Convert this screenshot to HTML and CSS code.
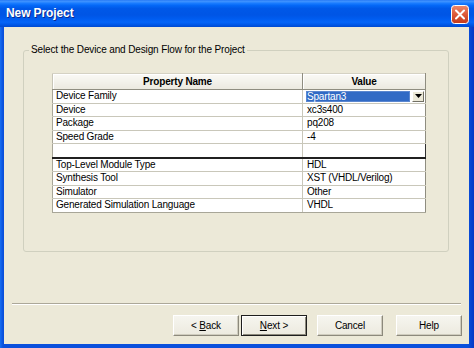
FILE: index.html
```html
<!DOCTYPE html>
<html lang="en">
<head>
  <meta charset="UTF-8" />
  <title>New Project</title>
  <link rel="stylesheet" href="styles.css">
</head>
<body>
  <div class="window">
    <div class="titlebar">
      <span class="title">New Project</span>
      <span class="close-btn">
        <svg width="18" height="19" viewBox="0 0 18 19">
          <defs>
            <linearGradient id="closeGrad" x1="0" y1="0" x2="0" y2="1">
              <stop offset="0" stop-color="#EE8A6C"/>
              <stop offset="0.5" stop-color="#DD5A3A"/>
              <stop offset="1" stop-color="#C3391B"/>
            </linearGradient>
          </defs>
          <rect x="0.5" y="0.5" width="17" height="18" rx="3" fill="url(#closeGrad)" stroke="#FFFFFF"/>
          <path d="M5 5.5 L13 13.5 M13 5.5 L5 13.5" stroke="#FFFFFF" stroke-width="2" stroke-linecap="round"/>
        </svg>
      </span>
    </div>

    <div class="client">
      <fieldset class="group">
        <legend>Select the Device and Design Flow for the Project</legend>
        <table class="props">
          <thead>
            <tr><th class="col-name">Property Name</th><th class="col-value">Value</th></tr>
          </thead>
          <tbody>
            <tr>
              <td>Device Family</td>
              <td class="combo-cell">
                <div class="combo">
                  <span class="combo-text">Spartan3</span>
                  <span class="combo-btn">
                    <svg width="7" height="4" viewBox="0 0 7 4"><path d="M0 0 H7 L3.5 4 Z" fill="#000"/></svg>
                  </span>
                </div>
              </td>
            </tr>
            <tr><td>Device</td><td>xc3s400</td></tr>
            <tr><td>Package</td><td>pq208</td></tr>
            <tr><td>Speed Grade</td><td>-4</td></tr>
            <tr class="blank"><td></td><td class="blank-value"></td></tr>
            <tr><td>Top-Level Module Type</td><td>HDL</td></tr>
            <tr><td>Synthesis Tool</td><td>XST (VHDL/Verilog)</td></tr>
            <tr><td>Simulator</td><td>Other</td></tr>
            <tr><td>Generated Simulation Language</td><td>VHDL</td></tr>
          </tbody>
        </table>
      </fieldset>

      <div class="spacer"></div>
      <div class="separator"></div>

      <div class="buttons">
        <button class="btn">&lt; <u>B</u>ack</button>
        <button class="btn default"><u>N</u>ext &gt;</button>
        <button class="btn cancel">Cancel</button>
        <button class="btn help">Help</button>
      </div>
    </div>
  </div>
</body>
</html>
```

FILE: styles.css
```css
body {
  margin: 0;
  padding: 0;
  font-family: 'Liberation Sans', Arial, sans-serif;
  font-size: 10px;
  color: #000;
  background: #0A4FDB;
}
.window {
  width: 474px;
  height: 348px;
  display: flex;
  flex-direction: column;
  background: linear-gradient(to right, #166EF2 0px, #0A50DC 3px, #0A50DC 468px, #0638C4 474px);
  overflow: hidden;
}
.titlebar {
  height: 27px;
  flex-shrink: 0;
  display: flex;
  align-items: center;
  justify-content: space-between;
  padding: 0 5px 0 6px;
  background: linear-gradient(to bottom,
    #2A7BF5 0%, #3D92FF 6%, #1A7CFF 12%, #0468F7 20%, #0058E8 32%,
    #0055E5 55%, #005CF0 70%, #0565F8 82%, #005AEB 90%, #0049D0 100%);
}
.title {
  color: #fff;
  font-weight: bold;
  font-size: 12px;
  letter-spacing: -0.1px;
  text-shadow: 1px 1px 0 #0A2A90;
  margin-top: -1px;
}
.close-btn {
  display: flex;
  margin-top: 1px;
}
.client {
  flex: 1;
  margin: 0 5px 4px 4px;
  background: #ECE9D8;
  display: flex;
  flex-direction: column;
  padding: 17px 0 8px 0;
}
.group {
  margin: 0 20px 0 19px;
  padding: 0 22px 38px 5px;
  border: 1px solid #D0D0BF;
  border-radius: 3px;
}
.group legend {
  padding: 0 2px;
  line-height: 12px;
  letter-spacing: -0.13px;
  color: #000;
}
.props {
  margin: 17px 0 0 23px;
  width: 374px;
  border-collapse: collapse;
  table-layout: fixed;
  background: #fff;
  letter-spacing: -0.18px;
}
.props .col-name {
  width: 249px;
}
.props th {
  height: 15px;
  padding: 0;
  font-weight: bold;
  text-align: center;
  background: linear-gradient(to bottom, #FAF9F5, #EBE9DF);
  border: 1px solid #8F8D80;
  border-top-color: #D5D2C4;
  border-left-color: #C8C6B8;
  box-shadow: inset 1px 1px 0 #FFFFFF;
}
.props td {
  height: 12.5px;
  padding: 0 0 0 3px;
  line-height: 12px;
  border: 1px solid #C9C7BA;
  white-space: nowrap;
  overflow: hidden;
}
.props td:first-child {
  border-left-color: #A8A698;
}
.props td:last-child {
  border-right-color: #8F8D80;
  padding-left: 4px;
}
.props tbody tr:last-child td {
  border-bottom-color: #A8A698;
}
.props tr.blank td {
  border-bottom: 2px solid #202020;
}
.props td.blank-value {
  border-left-color: #303030;
  border-right-color: #303030;
}
.props td.combo-cell {
  padding: 0 1px 0 3px;
}
.combo {
  display: flex;
  height: 11px;
}
.combo-text {
  flex: 1;
  background: #316AC5;
  color: #fff;
  line-height: 11px;
  padding-left: 1px;
  box-shadow: inset 0 0 0 1px #5A86CF;
}
.combo-btn {
  width: 12px;
  margin-left: 2px;
  display: flex;
  align-items: center;
  justify-content: center;
  background: #ECE9D8;
  border: 1px solid;
  border-color: #FFFFFF #716F64 #716F64 #FFFFFF;
  box-sizing: border-box;
}
.spacer {
  flex: 1;
}
.separator {
  margin: 0 8px;
  height: 1px;
  background: #ACA899;
  border-bottom: 1px solid #FFFFFF;
}
.buttons {
  display: flex;
  justify-content: flex-end;
  padding: 0 7px 0 0;
  margin-top: 10px;
}
.btn {
  width: 66px;
  height: 21px;
  padding: 0;
  font-family: 'Liberation Sans', Arial, sans-serif;
  font-size: 10px;
  letter-spacing: -0.15px;
  color: #000;
  background: linear-gradient(to bottom, #F6F5EF, #ECEADF);
  border: 1px solid;
  border-color: #FFFFFF #8C897C #8C897C #FFFFFF;
  box-shadow: inset -1px -1px 0 #CFCCBE;
  margin-left: 2px;
}
.btn.default {
  border-color: #1E1E1E;
  box-shadow: inset 1px 1px 0 #FFFFFF, inset -1px -1px 0 #8C897C;
}
.btn.cancel {
  margin-left: 10px;
}
.btn.help {
  margin-left: 13px;
}
```
